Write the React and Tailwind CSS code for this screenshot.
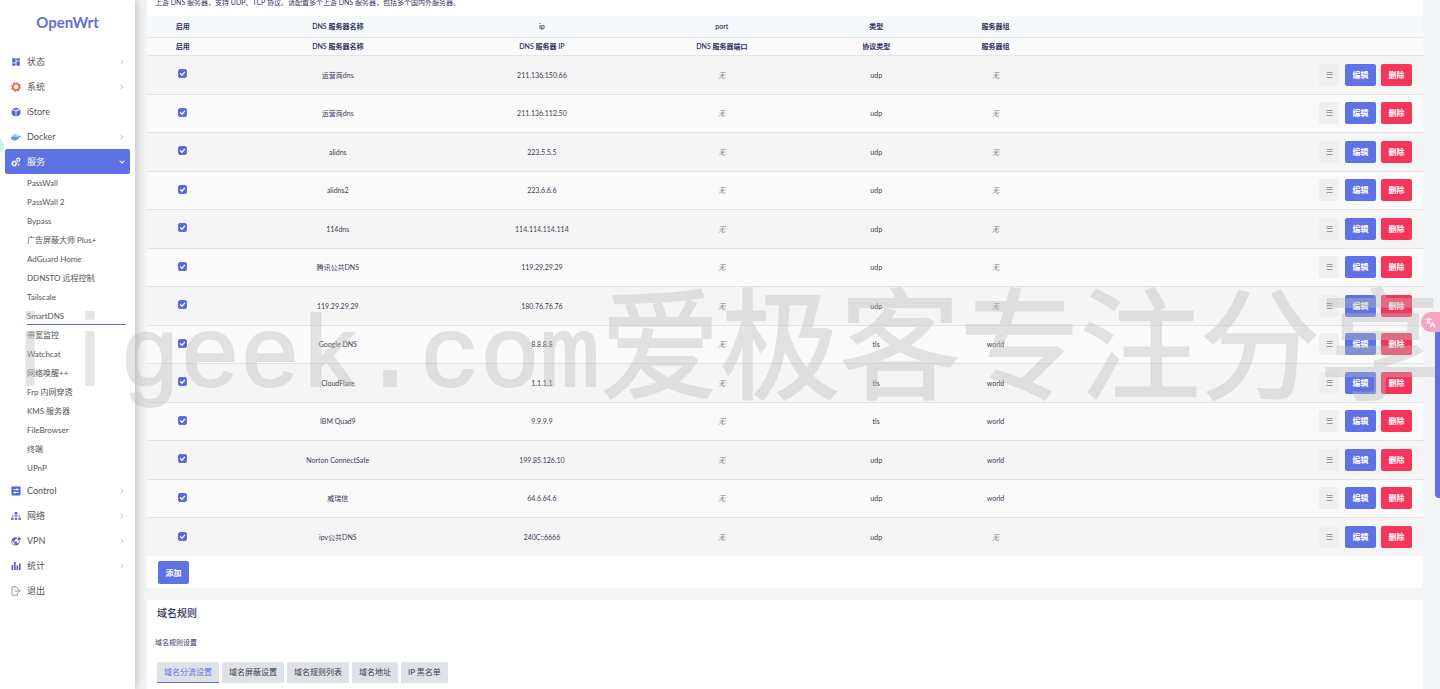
import React, { useState } from "react";
import { MdDashboard, MdVpnLock } from "react-icons/md";
import { FaDocker, FaSitemap, FaChevronDown } from "react-icons/fa";
import { ChevronRight, Languages } from "lucide-react";

const GearIcon = ({ className }) => (
    <svg viewBox="0 0 20 20" className={className} fill="none" stroke="currentColor">
        <circle cx="10" cy="10" r="6.4" strokeWidth="3.2" />
        <circle cx="10" cy="10" r="8.6" strokeWidth="2.4" strokeDasharray="3.4 3.354" />
    </svg>
);

const CogsIcon = ({ className }) => (
    <svg viewBox="0 0 20 20" className={className} fill="none" stroke="currentColor">
        <circle cx="6.5" cy="13" r="3.8" strokeWidth="2.6" />
        <circle cx="6.5" cy="13" r="5.6" strokeWidth="1.6" strokeDasharray="2.2 2.2" />
        <circle cx="14.5" cy="5.5" r="2.9" strokeWidth="2.2" />
        <circle cx="14.5" cy="5.5" r="4.4" strokeWidth="1.4" strokeDasharray="1.73 1.73" />
        <circle cx="15.5" cy="15.5" r="1.2" strokeWidth="1.4" />
    </svg>
);

const CubeIcon = ({ className }) => (
    <svg viewBox="0 0 20 20" className={className} fill="currentColor">
        <path d="M10 .8 17.6 4 10 7.6 2.4 4z" />
        <path d="M1.2 5.4 9.2 9v10.2L4 16.8Q1.2 15.4 1.2 12z" />
        <path d="M18.8 5.4 10.8 9v10.2l5.2-2.4q2.8-1.4 2.8-4.8z" />
        <path d="M6.5 2.5 14 5.8" stroke="#fff" strokeWidth="1" />
    </svg>
);

const ControlIcon = ({ className }) => (
    <svg viewBox="0 0 20 20" className={className}>
        <rect x="1" y="1" width="18" height="18" rx="1.5" fill="currentColor" />
        <path d="M4 7h12M4 13h12" stroke="#fff" strokeWidth="1.6" />
        <path d="M12 4.6v4.8M8 10.6v4.8" stroke="#fff" strokeWidth="2.2" />
    </svg>
);

const StatsIcon = ({ className }) => (
    <svg viewBox="0 0 20 20" className={className} fill="currentColor">
        <rect x="1" y="8" width="3.4" height="10" />
        <rect x="6" y="2" width="3.4" height="16" />
        <rect x="11" y="9" width="3.4" height="9" />
        <rect x="16" y="5" width="3.4" height="13" />
    </svg>
);

const ExitIcon = ({ className }) => (
    <svg viewBox="0 0 20 20" className={className} fill="none" stroke="currentColor" strokeWidth="1.7">
        <path d="M13 6V4l-2.5-2.5H2v17h11V14" />
        <path d="M7 10h11M15 6.5l3.5 3.5-3.5 3.5" />
    </svg>
);

const services = [
    "PassWall",
    "PassWall 2",
    "Bypass",
    "广告屏蔽大师 Plus+",
    "AdGuard Home",
    "DDNSTO 远程控制",
    "Tailscale",
    "SmartDNS",
    "带宽监控",
    "Watchcat",
    "网络唤醒++",
    "Frp 内网穿透",
    "KMS 服务器",
    "FileBrowser",
    "终端",
    "UPnP",
];

const menu = [
    { label: "状态", icon: MdDashboard, color: "text-[#5563d0]", arrow: true },
    { label: "系统", icon: GearIcon, color: "text-[#f0643f]", arrow: true },
    { label: "iStore", icon: CubeIcon, color: "text-[#5563d0]" },
    { label: "Docker", icon: FaDocker, color: "text-[#5b9be8]", arrow: true },
    { label: "服务", icon: CogsIcon, children: services },
    { label: "Control", icon: ControlIcon, color: "text-[#5563d0]", arrow: true },
    { label: "网络", icon: FaSitemap, color: "text-[#7a68c8]", arrow: true },
    { label: "VPN", icon: MdVpnLock, color: "text-[#6558be]", arrow: true },
    { label: "统计", icon: StatsIcon, color: "text-[#6a5cc8]", arrow: true },
    { label: "退出", icon: ExitIcon, color: "text-[#858585]" },
];

const servers = [
    { name: "运营商dns", ip: "211.136.150.66", type: "udp", group: "" },
    { name: "运营商dns", ip: "211.136.112.50", type: "udp", group: "" },
    { name: "alidns", ip: "223.5.5.5", type: "udp", group: "" },
    { name: "alidns2", ip: "223.6.6.6", type: "udp", group: "" },
    { name: "114dns", ip: "114.114.114.114", type: "udp", group: "" },
    { name: "腾讯公共DNS", ip: "119.29.29.29", type: "udp", group: "" },
    { name: "119.29.29.29", ip: "180.76.76.76", type: "udp", group: "" },
    { name: "Google DNS", ip: "8.8.8.8", type: "tls", group: "world" },
    { name: "CloudFlare", ip: "1.1.1.1", type: "tls", group: "world" },
    { name: "IBM Quad9", ip: "9.9.9.9", type: "tls", group: "world" },
    { name: "Norton ConnectSafe", ip: "199.85.126.10", type: "udp", group: "world" },
    { name: "威瑞信", ip: "64.6.64.6", type: "udp", group: "world" },
    { name: "ipv公共DNS", ip: "240C::6666", type: "udp", group: "" },
];

const tabs = ["域名分流设置", "域名屏蔽设置", "域名规则列表", "域名地址", "IP 黑名单"];

const Sidebar = () => (
    <aside className="relative z-10 w-[135px] shrink-0 bg-white shadow-[0_0_10px_rgba(0,0,0,0.3)]">
        <span className="absolute -left-3 top-[138px] size-4 rounded-full bg-[#c4f5df]" />
        <a href="#" className="block h-[49px] pt-3 text-center font-['Lato'] text-[15px] leading-5 font-bold text-[#5e6fd8]">
            OpenWrt
        </a>
        <nav>
            <ul>
                {menu.map(({ label, icon: Icon, color, arrow, children }) => (
                    <li key={label}>
                        <a
                            href="#"
                            className={
                                children
                                    ? "mx-[5px] flex h-[25px] items-center rounded-xs bg-[#5e72e4] pr-1 pl-[6px] text-[9px] text-white"
                                    : "mx-[5px] flex h-[25px] items-center pr-1 pl-[6px] text-[9px] text-[#555]"
                            }
                        >
                            <Icon className={`mr-[6px] size-[10px] shrink-0 ${color || ""}`} />
                            <span className="flex-1">{label}</span>
                            {arrow && <ChevronRight className="size-2 text-[#aaa]" />}
                            {children && <FaChevronDown className="mr-px size-[6px]" />}
                        </a>
                        {children && (
                            <ul className="pr-[9px] pl-[27px]">
                                {children.map((item) => (
                                    <li key={item} className="h-[19px]">
                                        <a
                                            href="#"
                                            className={
                                                item === "SmartDNS"
                                                    ? "block h-[18px] border-b border-[#5e62e4] text-[8px] leading-[18px] text-[#555]"
                                                    : "block text-[8px] leading-[19px] text-[#555]"
                                            }
                                        >
                                            {item}
                                        </a>
                                    </li>
                                ))}
                            </ul>
                        )}
                    </li>
                ))}
            </ul>
        </nav>
    </aside>
);

const Check = ({ label }) => {
    const [checked, setChecked] = useState(true);
    return (
        <span className="relative inline-block size-[9px] align-middle">
            <input
                type="checkbox"
                aria-label={label}
                checked={checked}
                onChange={(e) => setChecked(e.target.checked)}
                className="block size-[9px] appearance-none rounded-xs border border-[#5e72e4] checked:bg-[#5a68d6]"
            />
            {checked && (
                <svg viewBox="0 0 9 9" className="pointer-events-none absolute inset-0 size-[9px]" fill="none" stroke="#fff" strokeWidth="1.3">
                    <path d="M2.2 4.5 4 6.2 6.9 2.9" />
                </svg>
            )}
        </span>
    );
};

const Empty = () => <em className="text-[#777]">无</em>;

const ServerTable = () => (
    <table className="w-full table-fixed border-collapse text-center text-[7px] leading-[10px] text-[#3c3c55]">
        <colgroup>
            <col className="w-[5.6%]" />
            <col className="w-[18.7%]" />
            <col className="w-[13.3%]" />
            <col className="w-[14.9%]" />
            <col className="w-[9.3%]" />
            <col className="w-[9.4%]" />
            <col />
        </colgroup>
        <thead className="text-[#32325d]">
            <tr className="h-[21px] border-b border-[#e3e5e8] bg-[#f6f9fc]">
                <th className="font-semibold">启用</th>
                <th className="font-semibold">DNS 服务器名称</th>
                <th className="font-semibold">ip</th>
                <th className="font-semibold">port</th>
                <th className="font-semibold">类型</th>
                <th className="font-semibold">服务器组</th>
                <th></th>
            </tr>
            <tr className="h-[18px] border-b border-[#e5e5e5] bg-[#fafafa]">
                <th className="font-semibold">启用</th>
                <th className="font-semibold">DNS 服务器名称</th>
                <th className="font-semibold">DNS 服务器 IP</th>
                <th className="font-semibold">DNS 服务器端口</th>
                <th className="font-semibold">协议类型</th>
                <th className="font-semibold">服务器组</th>
                <th></th>
            </tr>
        </thead>
        <tbody>
            {servers.map((s, i) => (
                <tr key={i} className="border-b border-[#e3e3e3] last:border-0 odd:h-[39px] odd:bg-[#f5f5f5] even:h-[38px] even:bg-[#fafafa]">
                    <td className="pb-[3px]"><Check label={s.name} /></td>
                    <td>{s.name}</td>
                    <td>{s.ip}</td>
                    <td><Empty /></td>
                    <td>{s.type}</td>
                    <td>{s.group || <Empty />}</td>
                    <td>
                        <div className="flex items-center justify-end pr-[11px] text-[8px] font-bold">
                            <button aria-label="排序" className="mr-[6px] h-[22px] w-5 rounded-xs bg-[#efefef] font-normal text-[#888]">☰</button>
                            <button className="mr-[5px] h-[22px] w-[31px] rounded-xs bg-[#5e72e4] text-white">编辑</button>
                            <button className="h-[22px] w-[31px] rounded-xs bg-[#f5365c] text-white">删除</button>
                        </div>
                    </td>
                </tr>
            ))}
        </tbody>
    </table>
);

const Watermark = () => (
    <div className="pointer-events-none absolute top-[284px] left-0 z-20 flex h-[130px] w-full overflow-hidden leading-[120px] whitespace-nowrap text-[#bcbcbc] opacity-40">
        <div className="flex shrink-0 items-baseline pt-[6px]">
            <span className="w-[60px] text-center font-['Liberation_Sans'] text-[104px]">i</span>
            <span className="w-[60px] text-center font-['Liberation_Sans'] text-[104px]">i</span>
            <span className="font-['Liberation_Mono'] text-[100px] [-webkit-text-stroke:2px_#bcbcbc]">geek.com</span>
        </div>
        <span className="shrink-0 text-[120px] [-webkit-text-stroke:2px_#bcbcbc]">爱极客专注分享</span>
    </div>
);

export default function App() {
    const [tab, setTab] = useState(tabs[0]);

    return (
        <div className="relative flex h-screen w-full overflow-hidden bg-[#f2f4f5] font-['Lato','Noto_Sans_CJK_SC',sans-serif]">
            <Sidebar />

            <main className="flex min-w-0 flex-1 flex-col gap-3 pr-[17px] pl-3">
                <section className="bg-white">
                    <p className="-mt-[3px] mb-[9px] px-2 text-[7px] leading-[10px] text-[#32325d]">
                        上游 DNS 服务器，支持 UDP、TCP 协议。请配置多个上游 DNS 服务器，包括多个国内外服务器。
                    </p>
                    <ServerTable />
                    <div className="px-[11px] pt-[5px] pb-1">
                        <button className="block h-[23px] w-[31px] rounded-xs bg-[#5e72e4] text-[8px] font-bold text-white">添加</button>
                    </div>
                </section>

                <section className="flex-1 bg-white px-[10px] pt-[6px]">
                    <h3 className="text-[10px] leading-[14px] font-medium text-[#32325d]">域名规则</h3>
                    <p className="-ml-[2px] mt-4 text-[7px] leading-[12px] text-[#32325d]">域名规则设置</p>
                    <div role="tablist" className="mt-[14px] flex gap-[3px]">
                        {tabs.map((t) => (
                            <button
                                key={t}
                                role="tab"
                                aria-selected={t === tab}
                                onClick={() => setTab(t)}
                                className={
                                    t === tab
                                        ? "h-[21px] rounded-t-xs border-b border-[#5e72e4] bg-[#dee2e6] px-[7px] text-[8px] text-[#5e72e4]"
                                        : "h-[21px] rounded-t-xs border-b border-transparent bg-[#dee2e6] px-[7px] text-[8px] text-[#3c3c46]"
                                }
                            >
                                {t}
                            </button>
                        ))}
                    </div>
                </section>
            </main>

            {/* page scroll thumb and translate bubble sit over the right edge */}
            <span className="absolute top-[330px] right-0 h-[168px] w-[5px] rounded-l-sm bg-[#5e72e4]" />
            <Watermark />
            <button aria-label="翻译" className="absolute top-[312px] right-0 z-30 flex h-5 w-[19px] items-center justify-center rounded-l-full bg-[#f4a3c0] text-white">
                <Languages className="size-[11px]" strokeWidth={2.5} />
            </button>
        </div>
    );
}
